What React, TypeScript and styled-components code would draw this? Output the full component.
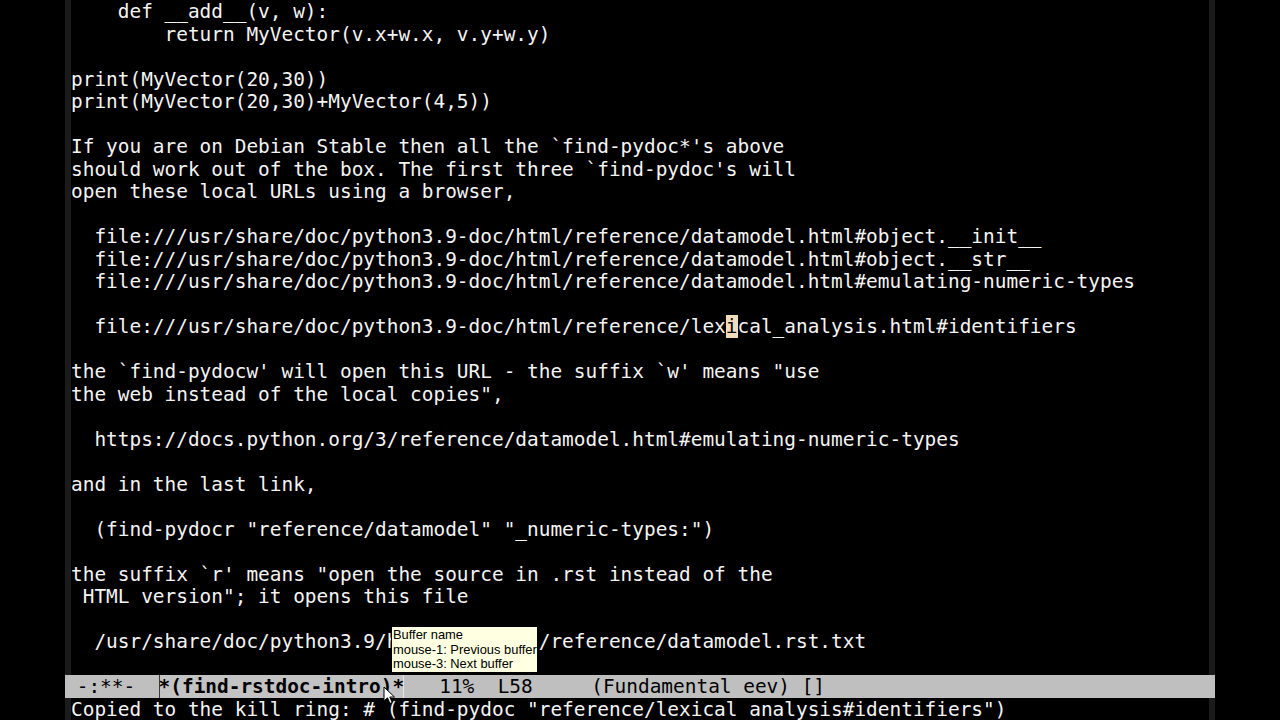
import React from "react";
import styled, { createGlobalStyle } from "styled-components";

const Global = createGlobalStyle`
  html, body { margin: 0; padding: 0; background: #000; }
  body { width: 1280px; height: 720px; overflow: hidden; }
  * { box-sizing: border-box; }
`;

const MONO = `"DejaVu Sans Mono", "Liberation Mono", monospace`;
const ROW = 22.5;

const Page = styled.div`
  position: relative;
  width: 1280px;
  height: 720px;
  background: #000;
  display: flex;
  font-family: ${MONO};
  font-size: 19.43px;
`;

const Frame = styled.div`
  margin-left: 65px;
  width: 1150px;
  display: flex;
  flex-direction: column;
`;

const WindowRow = styled.div<{ $h: number }>`
  display: flex;
  height: ${(p) => p.$h}px;
  overflow: hidden;
`;

const Fringe = styled.div`
  width: 6px;
  flex: none;
  background: #1b1b1b;
`;

const TextArea = styled.div`
  flex: 1;
  display: flex;
  flex-direction: column;
  padding-top: 1px;
  color: #f4f4f4;
  overflow: hidden;
`;

const Line = styled.div`
  flex: none;
  height: ${ROW}px;
  line-height: ${ROW}px;
  white-space: pre;
`;

const Cursor = styled.span`
  background: #f0dcbc;
  color: #000;
`;

const ModeLine = styled.div`
  height: ${ROW}px;
  line-height: ${ROW}px;
  padding-top: 1px;
  background: #bfbfbf;
  color: #000;
  white-space: pre;
  display: flex;
`;

const BufferName = styled.span`
  font-weight: bold;
  margin-top: -1px;
  padding-top: 1px;
  background: #c3c3c3;
  box-shadow: inset 1px 0 0 #3a3a3a, inset -1px 0 0 #e6e6e6;
`;

const Echo = styled.div`
  flex: 1;
  padding-top: 1px;
  color: #f4f4f4;
  white-space: pre;
  line-height: ${ROW}px;
`;

const Tooltip = styled.div`
  position: absolute;
  left: 391px;
  top: 626px;
  width: 147px;
  height: 47px;
  background: #ffffe1;
  border: 1px solid #000;
  padding: 1px 0 0 1px;
  font-family: "Liberation Sans", Arial, sans-serif;
  font-size: 12.9px;
  line-height: 14.5px;
  color: #000;
  white-space: pre;
`;

const Pointer = styled.svg`
  position: absolute;
  left: 383px;
  top: 686px;
`;

const lines: string[] = [
  "    def __add__(v, w):",
  "        return MyVector(v.x+w.x, v.y+w.y)",
  "",
  "print(MyVector(20,30))",
  "print(MyVector(20,30)+MyVector(4,5))",
  "",
  "If you are on Debian Stable then all the `find-pydoc*'s above",
  "should work out of the box. The first three `find-pydoc's will",
  "open these local URLs using a browser,",
  "",
  "  file:///usr/share/doc/python3.9-doc/html/reference/datamodel.html#object.__init__",
  "  file:///usr/share/doc/python3.9-doc/html/reference/datamodel.html#object.__str__",
  "  file:///usr/share/doc/python3.9-doc/html/reference/datamodel.html#emulating-numeric-types",
  "",
  "CURSOR",
  "",
  "the `find-pydocw' will open this URL - the suffix `w' means \"use",
  "the web instead of the local copies\",",
  "",
  "  https://docs.python.org/3/reference/datamodel.html#emulating-numeric-types",
  "",
  "and in the last link,",
  "",
  "  (find-pydocr \"reference/datamodel\" \"_numeric-types:\")",
  "",
  "the suffix `r' means \"open the source in .rst instead of the",
  " HTML version\"; it opens this file",
  "",
  "  /usr/share/doc/python3.9/html/_sources/reference/datamodel.rst.txt",
  "",
];

export default function App() {
  return (
    <Page>
      <Global />
      <Frame>
        <WindowRow $h={ROW * 30}>
          <Fringe />
          <TextArea>
            {lines.map((l, i) =>
              l === "CURSOR" ? (
                <Line key={i}>
                  {"  file:///usr/share/doc/python3.9-doc/html/reference/lex"}
                  <Cursor>i</Cursor>
                  {"cal_analysis.html#identifiers"}
                </Line>
              ) : (
                <Line key={i}>{l}</Line>
              )
            )}
          </TextArea>
          <Fringe />
        </WindowRow>
        <ModeLine>
          <span>{" -:**-  "}</span>
          <BufferName>*(find-rstdoc-intro)*</BufferName>
          <span>{"   11%  L58     (Fundamental eev) []"}</span>
        </ModeLine>
        <WindowRow $h={ROW}>
          <Fringe />
          <Echo>{"Copied to the kill ring: # (find-pydoc \"reference/lexical_analysis#identifiers\")"}</Echo>
          <Fringe />
        </WindowRow>
      </Frame>
      <Tooltip>{"Buffer name\nmouse-1: Previous buffer\nmouse-3: Next buffer"}</Tooltip>
      <Pointer width="14" height="20" viewBox="0 0 14 20">
        <path
          d="M1 1 L1 15 L4.5 11.8 L7 17.5 L9.2 16.5 L6.8 11 L11.5 11 Z"
          fill="#fff"
          stroke="#000"
          strokeWidth="1"
          strokeLinejoin="round"
        />
      </Pointer>
    </Page>
  );
}
